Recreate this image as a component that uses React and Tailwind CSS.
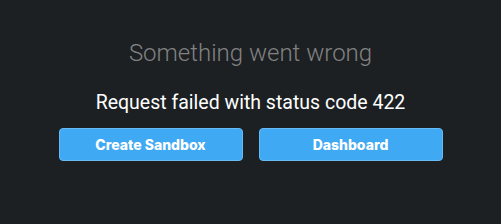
import React from 'react';

export default function App() {
  return (
    <div className="w-full h-[224px] bg-[#1c2022] flex flex-col items-center pt-[38px]" style={{ fontFamily: 'Roboto, sans-serif' }}>
      <h1 className="text-[24px] font-light text-[#828282] leading-[30px]">Something went wrong</h1>
      <p className="mt-[23px] text-[19.5px] text-white leading-[24px]">Request failed with status code 422</p>
      <div className="mt-[13px] flex gap-4">
        <button className="w-[184px] h-[33px] rounded-[4px] bg-[#40a9f3] border border-[#67bbf5] text-white text-[14px] font-extrabold font-['Inter',sans-serif]">
          Create Sandbox
        </button>
        <button className="w-[184px] h-[33px] rounded-[4px] bg-[#40a9f3] border border-[#67bbf5] text-white text-[14px] font-extrabold font-['Inter',sans-serif]">
          Dashboard
        </button>
      </div>
    </div>
  );
}
